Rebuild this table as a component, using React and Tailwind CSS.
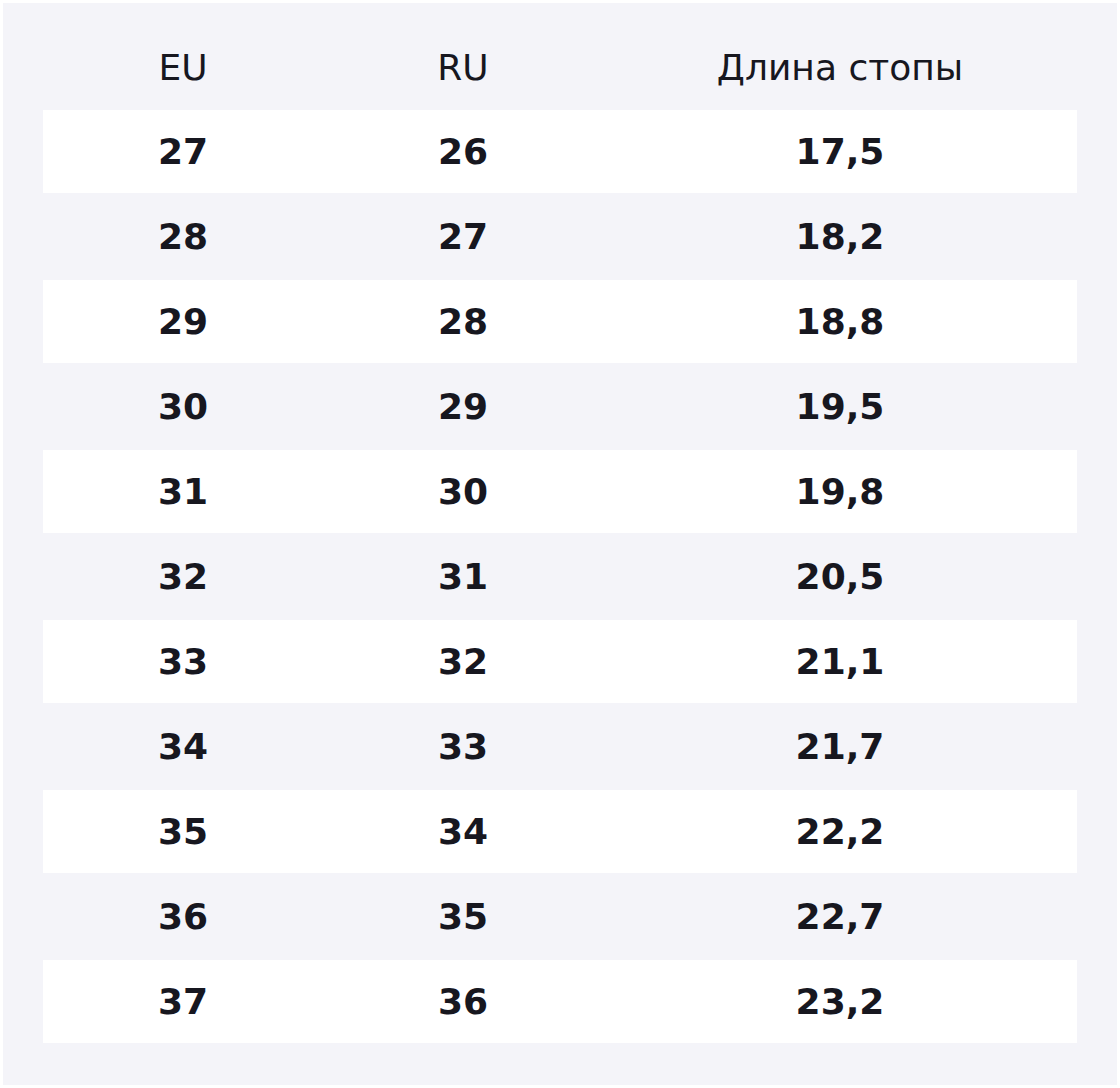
const rows = [
  ["27", "26", "17,5"],
  ["28", "27", "18,2"],
  ["29", "28", "18,8"],
  ["30", "29", "19,5"],
  ["31", "30", "19,8"],
  ["32", "31", "20,5"],
  ["33", "32", "21,1"],
  ["34", "33", "21,7"],
  ["35", "34", "22,2"],
  ["36", "35", "22,7"],
  ["37", "36", "23,2"],
];

export default function App() {
  return (
    <div className="bg-white p-[3px]" style={{ fontFamily: '"DejaVu Sans", sans-serif' }}>
      <div className="bg-[#f4f4f9] px-[40px] pt-[22px] pb-[40px] text-[#17171f]">
        <div className="grid grid-cols-[280px_280px_1fr] h-[85px] items-center text-center text-[36px] leading-none">
          <div>EU</div>
          <div>RU</div>
          <div>Длина стопы</div>
        </div>
        {rows.map((r, i) => (
          <div
            key={i}
            className={
              i % 2 === 0
                ? "grid grid-cols-[280px_280px_1fr] h-[85px] items-center text-center text-[36px] leading-none font-bold bg-white border-b-2 border-[#f4f4f9]"
                : "grid grid-cols-[280px_280px_1fr] h-[85px] items-center text-center text-[36px] leading-none font-bold border-b-2 border-[#f4f4f9]"
            }
          >
            <div>{r[0]}</div>
            <div>{r[1]}</div>
            <div>{r[2]}</div>
          </div>
        ))}
      </div>
    </div>
  );
}
